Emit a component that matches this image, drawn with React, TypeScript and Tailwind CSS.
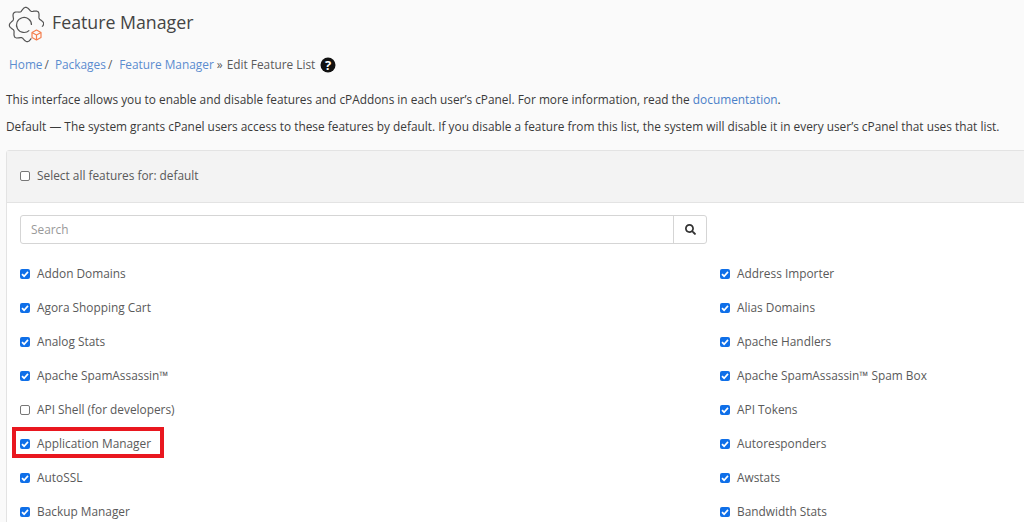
import { FaSearch } from "react-icons/fa";

const features = [
  ["Addon Domains", "Address Importer"],
  ["Agora Shopping Cart", "Alias Domains"],
  ["Analog Stats", "Apache Handlers"],
  ["Apache SpamAssassin™", "Apache SpamAssassin™ Spam Box"],
  ["API Shell (for developers)", "API Tokens"],
  ["Application Manager", "Autoresponders"],
  ["AutoSSL", "Awstats"],
  ["Backup Manager", "Bandwidth Stats"],
];

const Check = ({ on = true }: { on?: boolean }) =>
  on ? (
    <span className="flex h-[10px] w-[10px] shrink-0 items-center justify-center rounded-[2px] bg-[#0f6fe8]">
      <svg viewBox="0 0 10 10" className="h-[10px] w-[10px]" fill="none" stroke="#fff" strokeWidth="1.7">
        <path d="M2 5.2 4.1 7.2 8 2.9" />
      </svg>
    </span>
  ) : (
    <span className="h-[10px] w-[10px] shrink-0 rounded-[2px] border border-[#777] bg-white" />
  );

// wavy gear outline, open at the lower right where the cube sits
const gearPoints = () => {
  const pts: string[] = [];
  for (let a = 62; a <= 368; a += 3) {
    const t = (a * Math.PI) / 180;
    const r = 15.6 + 1.6 * Math.cos(8 * t + 0.4);
    pts.push(`${(20.5 + r * Math.cos(t)).toFixed(1)},${(21.5 + r * Math.sin(t)).toFixed(1)}`);
  }
  return pts.join(" ");
};

const GearLogo = () => (
  <svg viewBox="0 0 38 40" className="h-[40px] w-[38px]" fill="none">
    <polyline points={gearPoints()} stroke="#555" strokeWidth="1.2" strokeLinejoin="round" />
    <path d="M23.300 27.300A7.500 7.500 0 1 1 25.500 22" stroke="#555" strokeWidth="1.200" />
    <circle cx="30.500" cy="32" r="6.300" fill="#fafafa" />
    <path
      d="M30.500 27 35 29.500v5L30.500 37 26 34.500v-5ZM26 29.500 30.500 32 35 29.500M30.500 32v5"
      stroke="#f47f4f"
      strokeWidth="1.200"
      strokeLinejoin="round"
    />
  </svg>
);

const App = () => {
  return (
    <div className="h-[522px] w-[1024px] overflow-hidden bg-[#fafafa] font-['Open_Sans',sans-serif] text-[11.87px] text-[#5a5a5a]">
      <div className="flex h-[46px] items-center pl-[6px]">
        <GearLogo />
        <h1 className="ml-[8px] pb-[2px] text-[17.75px] font-normal text-[#444]">Feature Manager</h1>
      </div>
      <div className="mt-[10px] flex h-[18px] items-center pl-[9px]">
        <a className="text-[#5b8ccf]">Home</a>
        <span className="ml-[2px] mr-[6px]">/</span>
        <a className="text-[#5b8ccf]">Packages</a>
        <span className="ml-[2px] mr-[7px]">/</span>
        <a className="text-[#5b8ccf]">Feature Manager</a>
        <span className="ml-[3px] mr-[4px]">»</span>
        <span>Edit Feature List</span>
        <svg viewBox="0 0 16 16" className="ml-[5px] h-[16px] w-[16px]">
          <circle cx="8" cy="8" r="7.500" fill="#111" />
          <text x="8" y="12.500" textAnchor="middle" fontSize="13" fontWeight="700" fill="#fff" fontFamily="Open Sans, sans-serif">?</text>
        </svg>
      </div>
      <p className="mt-[17px] h-[16px] pl-[6px] leading-[16px] text-[#3a3a3a]">
        This interface allows you to enable and disable features and cPAddons in each user’s cPanel. For more information, read the{" "}
        <a className="text-[#4a80c8]">documentation</a>.
      </p>
      <p className="mt-[11px] h-[16px] whitespace-nowrap pl-[6px] leading-[16px] text-[#3a3a3a]">
        Default — The system grants cPanel users access to these features by default. If you disable a feature from this list, the system will disable it in every user’s cPanel that uses that list.
      </p>
      <div className="ml-[6px] mt-[16px] h-[400px] w-[1100px] rounded-tl-[3px] border border-[#e3e3e3] bg-white">
        <div className="flex h-[52px] items-center gap-[7px] border-b border-[#e3e3e3] bg-[#f3f3f3] pb-[1px] pl-[13px]">
          <Check on={false} />
          <span>Select all features for: default</span>
        </div>
        <div className="pl-[13px] pt-[12px]">
          <div className="flex h-[29px] w-[687px] rounded-[3px] border border-[#d5d5d5] bg-white">
            <div className="flex flex-1 items-center pl-[10px] text-[#999]">Search</div>
            <div className="flex w-[33px] items-center justify-center border-l border-[#d5d5d5]">
              <FaSearch size={11} className="text-[#333]" />
            </div>
          </div>
          <div className="mt-[20px] grid grid-cols-[700px_1fr] gap-y-[14px]">
            {features.map(([left, right]) => (
              <div key={left} className="contents">
                <div className="flex h-[20px] items-center gap-[7px]">
                  {left === "Application Manager" ? (
                    <div className="relative flex items-center gap-[7px]">
                      <div className="absolute left-[-8px] top-[-8px] h-[31px] w-[152px] border-[4px] border-[#e9171f]" />
                      <Check />
                      <span>{left}</span>
                    </div>
                  ) : (
                    <>
                      <Check on={left !== "API Shell (for developers)"} />
                      <span>{left}</span>
                    </>
                  )}
                </div>
                <div className="flex h-[20px] items-center gap-[7px]">
                  <Check />
                  <span>{right}</span>
                </div>
              </div>
            ))}
          </div>
        </div>
      </div>
    </div>
  );
};

export default App;
